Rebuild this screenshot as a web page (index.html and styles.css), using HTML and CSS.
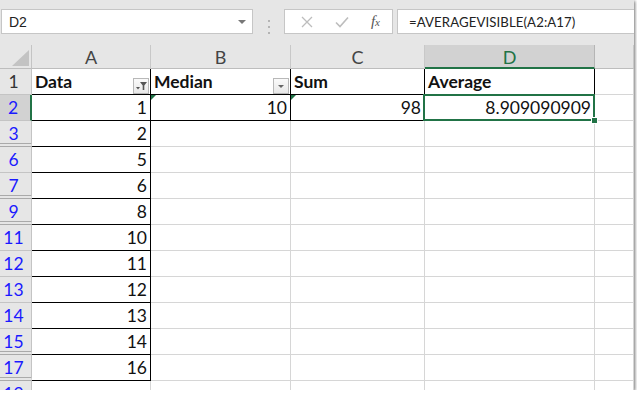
FILE: index.html
```html
<!doctype html>
<html>
<head>
<title>AVERAGEVISIBLE</title>
<link rel="stylesheet" href="styles.css">
</head>
<body>
<div class="window">
	<div class="toolbar">
		<div class="namebox">
			<span>D2</span>
			<svg class="caret" width="8" height="4" viewBox="0 0 8 4"><path d="M0 0h8L4 4z" fill="#777"/></svg>
		</div>
		<div class="grip">
			<svg width="3" height="14" viewBox="0 0 3 14"><rect x="0" y="0" width="2" height="2" fill="#b4b4b4"/><rect x="0" y="6" width="2" height="2" fill="#b4b4b4"/><rect x="0" y="12" width="2" height="2" fill="#b4b4b4"/></svg>
		</div>
		<div class="fxbox">
			<svg width="12" height="12" viewBox="0 0 12 12"><path d="M1 1l10 10M11 1L1 11" stroke="#bdbdbd" stroke-width="1.3" fill="none"/></svg>
			<svg width="14" height="12" viewBox="0 0 14 12"><path d="M1 6.5l4 4L13 1.5" stroke="#bdbdbd" stroke-width="1.6" fill="none"/></svg>
			<span class="fx">f<small>x</small></span>
		</div>
		<div class="formula">=AVERAGEVISIBLE(A2:A17)</div>
	</div>

	<div class="sheet">
		<div class="corner"></div>
		<div class="col">A</div>
		<div class="col">B</div>
		<div class="col">C</div>
		<div class="col sel">D</div>
		<div class="col"></div>

		<div class="rh plain">1</div>
		<div class="c bk h">Data <span class="filter"><svg width="12" height="10" viewBox="0 0 12 10"><path d="M1 6h4L3 8.5z" fill="#555"/><path d="M5 1h7L9.3 4.5V9H7.7V4.5z" fill="#555"/></svg></span></div>
		<div class="c bk h">Median <span class="filter"><svg width="12" height="10" viewBox="0 0 12 10"><path d="M3 4h6L6 7z" fill="#666"/></svg></span></div>
		<div class="c bk h">Sum</div>
		<div class="c bk h">Average</div>
		<div class="c"></div>

		<div class="rh cur">2</div>
		<div class="c bk n">1</div>
		<div class="c bk n tri">10</div>
		<div class="c bk n tri">98</div>
		<div class="c n active">8.909090909</div>
		<div class="c"></div>

		<div class="rh hid">3</div>
		<div class="c bk n">2</div>
		<div class="c"></div><div class="c"></div><div class="c"></div><div class="c"></div>

		<div class="rh">6</div>
		<div class="c bk n">5</div>
		<div class="c"></div><div class="c"></div><div class="c"></div><div class="c"></div>

		<div class="rh hid">7</div>
		<div class="c bk n">6</div>
		<div class="c"></div><div class="c"></div><div class="c"></div><div class="c"></div>

		<div class="rh hid">9</div>
		<div class="c bk n">8</div>
		<div class="c"></div><div class="c"></div><div class="c"></div><div class="c"></div>

		<div class="rh">11</div>
		<div class="c bk n">10</div>
		<div class="c"></div><div class="c"></div><div class="c"></div><div class="c"></div>

		<div class="rh">12</div>
		<div class="c bk n">11</div>
		<div class="c"></div><div class="c"></div><div class="c"></div><div class="c"></div>

		<div class="rh">13</div>
		<div class="c bk n">12</div>
		<div class="c"></div><div class="c"></div><div class="c"></div><div class="c"></div>

		<div class="rh">14</div>
		<div class="c bk n">13</div>
		<div class="c"></div><div class="c"></div><div class="c"></div><div class="c"></div>

		<div class="rh hid">15</div>
		<div class="c bk n">14</div>
		<div class="c"></div><div class="c"></div><div class="c"></div><div class="c"></div>

		<div class="rh hid">17</div>
		<div class="c bk n">16</div>
		<div class="c"></div><div class="c"></div><div class="c"></div><div class="c"></div>

		<div class="rh">19</div>
		<div class="c"></div>
		<div class="c"></div><div class="c"></div><div class="c"></div><div class="c"></div>
	</div>
</div>
</body>
</html>
```

FILE: styles.css
```css
body {
	margin: 0;
	background: #ffffff;
}
.window {
	width: 634px;
	height: 390px;
	background: #e6e6e6;
	box-shadow: 1px 1px 3px rgba(0, 0, 0, 0.55);
	overflow: hidden;
}

/* formula toolbar */
.toolbar {
	display: flex;
	height: 45px;
	padding-top: 9px;
	box-sizing: border-box;
	font-family: "Liberation Sans", Arial, sans-serif;
}
.namebox, .fxbox, .formula {
	height: 25px;
	box-sizing: border-box;
	background: #fff;
	border: 1px solid #c6c6c6;
	display: flex;
	align-items: center;
}
.namebox {
	margin-left: 1px;
	width: 252px;
	padding: 0 6px 0 7px;
	justify-content: space-between;
	font-size: 14px;
	color: #222;
}
.grip {
	width: 31px;
	display: flex;
	align-items: center;
	justify-content: center;
	padding-left: 2px;
	box-sizing: border-box;
}
.fxbox {
	width: 109px;
	padding: 0 12px 0 16px;
	justify-content: space-between;
}
.fx {
	font-family: "Liberation Serif", serif;
	font-style: italic;
	font-size: 15px;
	color: #555;
}
.fx small {
	font-size: 11px;
}
.formula {
	margin-left: 4px;
	flex: 1;
	border-right: none;
	padding-left: 11px;
	font-family: Lato, sans-serif;
	font-size: 13.2px;
	letter-spacing: 0.1px;
	color: #222;
}

/* grid */
.sheet {
	display: grid;
	grid-template-columns: 32px 119px 140px 134px 170px 1fr;
	grid-template-rows: 24px repeat(13, 26px);
	height: 345px;
	overflow: hidden;
	font-family: Lato, "Liberation Sans", sans-serif;
	font-size: 17.5px;
	color: #111;
}
.corner {
	background: #e6e6e6;
	border-right: 1px solid #c4c4c4;
	border-bottom: 1px solid #bdbdbd;
	position: relative;
}
.corner::after {
	content: "";
	position: absolute;
	right: 2px;
	bottom: 2px;
	width: 17px;
	height: 16px;
	background: #c3c3c3;
	clip-path: polygon(100% 0, 100% 100%, 0 100%);
}
.col {
	background: #e6e6e6;
	border-right: 1px solid #c8c8c8;
	border-bottom: 1px solid #bdbdbd;
	text-align: center;
	line-height: 24px;
	color: #444;
	font-size: 18px;
}
.col.sel {
	background: #d2d2d2;
	color: #217346;
	border-bottom: 2px solid #217346;
	border-right-color: #b5b5b5;
}
.rh {
	background: #e6e6e6;
	border-right: 1px solid #c4c4c4;
	border-bottom: 1px solid #c4c4c4;
	box-sizing: border-box;
	padding-right: 4px;
	text-align: center;
	line-height: 25px;
	color: #1a1aff;
	font-size: 17.5px;
}
.rh.plain {
	color: #333;
}
.rh.cur {
	background: #d2d2d2;
	border-right: 2px solid #217346;
}
.rh.hid {
	border-bottom: 4px double #aaaaaa;
}
.c {
	background: #fff;
	border-right: 1px solid #d6d6d6;
	border-bottom: 1px solid #d6d6d6;
	box-sizing: border-box;
	line-height: 25px;
	padding: 0 3px;
	white-space: nowrap;
	position: relative;
}
.c.bk {
	border-right-color: #000;
	border-bottom-color: #000;
}
.c.h {
	font-weight: bold;
	display: flex;
	justify-content: space-between;
	align-items: center;
	padding-right: 1px;
}
.c.n {
	text-align: right;
}
.filter {
	width: 16px;
	height: 16px;
	box-sizing: border-box;
	border: 1px solid #b8b8b8;
	background: linear-gradient(#fafafa, #e8e8e8);
	display: flex;
	align-items: center;
	justify-content: center;
	margin-top: 8px;
}
.tri::before {
	content: "";
	position: absolute;
	left: 0;
	top: 0;
	border-top: 5px solid #1e7145;
	border-right: 5px solid transparent;
}
.active {
	border-right-color: #000;
}
.active::after {
	content: "";
	position: absolute;
	left: -2px;
	top: -1px;
	right: -1px;
	bottom: -1px;
	border: 2px solid #217346;
}
.active::before {
	content: "";
	position: absolute;
	right: -4px;
	bottom: -4px;
	width: 5px;
	height: 5px;
	background: #217346;
	border: 1px solid #fff;
	z-index: 2;
}
```
